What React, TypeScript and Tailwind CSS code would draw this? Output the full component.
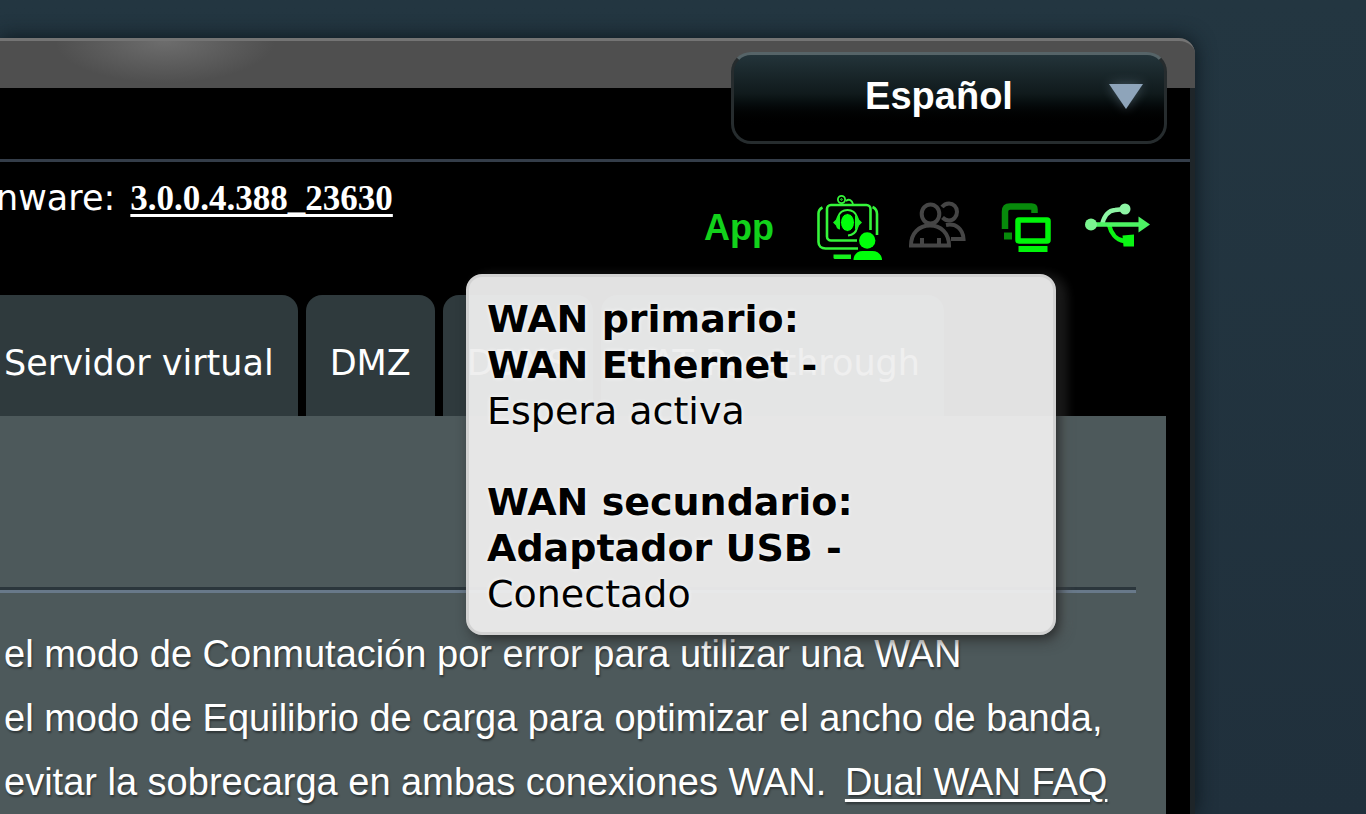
import React from 'react';

const VERDANA = "font-['Verdana','DejaVu_Sans',sans-serif]";

const TABS = ['Servidor virtual', 'DMZ', 'DDNS', 'NAT Passthrough'];

const WAN_STATUS = [
  { title: 'WAN primario:', link: 'WAN Ethernet -', state: 'Espera activa' },
  { title: 'WAN secundario:', link: 'Adaptador USB -', state: 'Conectado' },
];

const SupportIcon: React.FC = () => (
  <svg viewBox="0 0 66 66" className="h-[66px] w-[66px] overflow-visible" fill="none" stroke="#35f53a" strokeWidth="2.6">
    <circle cx="27.5" cy="4.5" r="3.6" strokeWidth="1.8" />
    <circle cx="27.5" cy="4.5" r="0.8" strokeWidth="1" />
    <path d="M32 6c3-2.5 6-1 7 3" strokeWidth="1.8" />
    <path d="M43 45.500H17a4 4 0 0 1-4-4V14a4 4 0 0 1 4-4h35.500a4 4 0 0 1 4 4v21" />
    <path d="M8.500 12.500c-3 1.500-4 3-4 6V47c0 4 3 6.500 7 6.500H44M58.500 12c3.500 1.500 4.500 3.500 4.500 7v21" />
    <path d="M24 22c1.500-4.500 5-7 9.500-7s8 2.500 9.500 7M43 33c-1 4.500-4 7-9 7.500" strokeWidth="2" />
    <path d="M26 20.500v14c-2 0-3.500-1.500-4-4l-3-3 3-3c.5-2.500 2-4 4-4zM41 20.500v14c2 0 3.500-1.500 4-4l3-3-3-3c-.5-2.500-2-4-4-4z" fill="#16f21c" stroke="none" />
    <ellipse cx="33.500" cy="27.500" rx="7" ry="9" fill="#00ff0a" stroke="#000" strokeWidth="1" />
    <path d="M19.500 59.500H37V64H21a1.500 1.500 0 0 1-1.500-1.500z" fill="#16f21c" stroke="none" />
    <circle cx="53.200" cy="45.500" r="8.200" fill="#00ff0a" stroke="none" />
    <path d="M39.500 65c0-5.500 4-9 9-9h10c5 0 9.500 3.500 9.500 9z" fill="#00ff0a" stroke="none" />
  </svg>
);

const GuestIcon: React.FC = () => (
  <svg viewBox="0 0 66 66" className="h-[66px] w-[66px]" fill="none" stroke="#454545" strokeWidth="4">
    <ellipse cx="26.500" cy="19" rx="8.800" ry="9.600" />
    <path d="M38 12c2-2.500 4.500-3.500 7-3.500 4.500 0 8 3.500 8 8.300s-3.500 8.700-8 8.700c-2.500 0-4.500-1-6.500-3" />
    <path d="M7 50.500C7 38 15 30.500 26 30.500S45 38 45 50.500z" />
    <path d="M42 30c10-2 17 4 17.500 14H47M18 43v6M35 43v6" />
  </svg>
);

const ClientsIcon: React.FC = () => (
  <svg viewBox="0 0 66 66" className="h-[66px] w-[66px]" fill="none" strokeWidth="5.500">
    <path d="M40.500 18v-3.500q0-3-3-3H16q-5 0-5 5V34" stroke="#078a0b" strokeWidth="6.500" />
    <path d="M10 37.500h8v7h-8z" fill="#078a0b" />
    <rect x="24" y="25" width="30" height="21" rx="1" stroke="#00f50a" />
    <path d="M24.500 51h29v6h-29z" fill="#00f50a" />
  </svg>
);

const UsbIcon: React.FC = () => (
  <svg viewBox="0 0 66 66" className="h-[66px] w-[66px]" fill="none" strokeWidth="4.500">
    <path d="M18 29.500c2-8 6-14 13-14.500l10-1" stroke="#8df5a4" />
    <circle cx="41" cy="14" r="5.500" fill="#8df5a4" />
    <path d="M25 30c2 8 7 15 15 16" stroke="#0bf514" />
    <path d="M38.500 40.500l11.500-1v12H39.500z" fill="#0bf514" />
    <path d="M6 29.500h50" stroke="#4cf463" />
    <circle cx="7" cy="29.500" r="6" fill="#7bf590" />
    <path d="M54.500 21.500L66 29.500l-11.500 8z" fill="#4cf463" />
  </svg>
);

const ICONS = [
  { label: 'Asistencia', Icon: SupportIcon },
  { label: 'Red de invitados', Icon: GuestIcon },
  { label: 'Clientes', Icon: ClientsIcon },
  { label: 'USB', Icon: UsbIcon },
];

const LanguageSelect: React.FC = () => (
  <div className="relative w-[436px]">
    <select
      aria-label="Idioma"
      defaultValue="es"
      className="h-[92px] w-full appearance-none rounded-[20px] border-3 border-[#262c2e] border-t-[#566468] bg-linear-to-b from-[#23343a] via-[#101a1c] via-45% to-black to-85% pr-5 pb-1 font-['Liberation_Sans',Arial,sans-serif] text-[38px] font-bold text-white [text-align-last:center]"
    >
      <option value="es">Español</option>
      <option value="en">English</option>
    </select>
    <svg viewBox="0 0 34 26" className="pointer-events-none absolute top-8 right-6 h-[26px] w-[34px] drop-shadow-[0_0_6px_#8fa9bf66]">
      <path d="M0 0h34L17 25z" fill="#8ea4ba" />
    </svg>
  </div>
);

// Status bubble, hangs below the icon row
const WanTooltip: React.FC = () => (
  <div
    role="tooltip"
    className="absolute top-[112px] right-[134px] z-10 h-[361px] w-[590px] rounded-[16px] border-3 border-[#d2d2d2] bg-[#eeeeee]/95 px-[18px] pt-[19px] text-[38px] leading-[46px] text-black shadow-[5px_5px_14px_#000000b0,7px_4px_14px_#ffffff38] [text-shadow:0_0_4px_#fff]"
  >
    {WAN_STATUS.map((wan) => (
      <p key={wan.title} className="mb-[45px]">
        <strong>{wan.title}</strong>
        <br />
        <strong>{wan.link}</strong>
        <br />
        {wan.state}
      </p>
    ))}
  </div>
);

const App: React.FC = () => {
  return (
    <div className="flex min-h-screen flex-col overflow-hidden bg-linear-to-b from-[#233641] to-[#20303c] pt-[38px] pr-[171px]">
      <div className={`flex flex-1 flex-col rounded-tr-[16px] border-r-[5px] border-[#1e2529] bg-black text-white shadow-[0_0_20px_#0c161c] ${VERDANA}`}>
        <header className="mr-[-5px] flex h-[121px] justify-end rounded-tr-[16px] border-t-3 border-[#747474] bg-[radial-gradient(ellipse_110px_42px_at_165px_0,#6d6d6d,transparent),linear-gradient(#4f4f4f,#4f4f4f)] bg-size-[100%_47px] bg-no-repeat pt-[11px] pr-7">
          <LanguageSelect />
        </header>

        <div className="relative flex h-[136px] justify-between border-t-3 border-[#343d49]">
          <p className="-ml-1 pt-[10px] text-[35px] whitespace-nowrap">
            nware:{' '}
            <a href="#firmware" className="ml-1 font-['Liberation_Serif',serif] font-bold underline decoration-3 underline-offset-4">
              3.0.0.4.388_23630
            </a>
          </p>
          <div className="flex items-start gap-6 pt-[33px] pr-10">
            <button className="h-[66px] px-4 font-['Liberation_Sans',Arial,sans-serif] text-[36px] font-bold text-[#12d21b]">App</button>
            {ICONS.map(({ label, Icon }) => (
              <button key={label} aria-label={label}>
                <Icon />
              </button>
            ))}
          </div>
          <WanTooltip />
        </div>

        <nav className="flex h-[121px] gap-2">
          {TABS.map((tab) => (
            <a
              key={tab}
              href="#tab"
              className="flex items-center rounded-t-[16px] bg-[#2f3a3d] px-6 pt-4 text-[35px] whitespace-nowrap first:rounded-tl-none first:pl-1"
            >
              {tab}
            </a>
          ))}
        </nav>

        <main className="mr-6 flex-1 bg-[#4d595b] pt-[171px] font-['Liberation_Sans',Arial,sans-serif]">
          <hr className="mr-[30px] h-[6px] border-t-3 border-b-3 border-t-[#2b363c] border-b-[#68798a]" />
          <p className="mt-[29px] pl-1 text-[38px] leading-[64px] whitespace-nowrap [text-shadow:1px_2px_2px_#0006]">
            el modo de Conmutación por error para utilizar una WAN
            <br />
            el modo de Equilibrio de carga para optimizar el ancho de banda,
            <br />
            evitar la sobrecarga en ambas conexiones WAN.{' '}
            <a href="#faq" className="ml-2 underline decoration-3 underline-offset-4">
              Dual WAN FAQ
            </a>
          </p>
        </main>
      </div>
    </div>
  );
};

export default App;
